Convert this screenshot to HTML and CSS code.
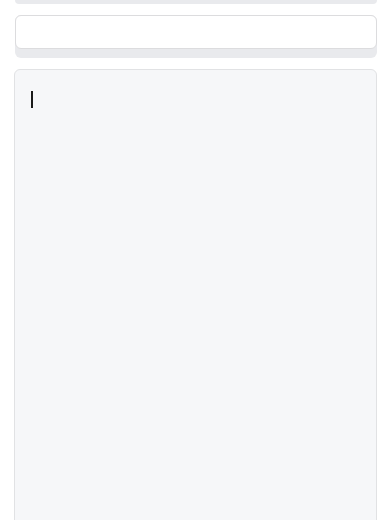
FILE: index.html
```html
<!DOCTYPE html>
<html>
<head>
<meta charset="utf-8">
<link rel="stylesheet" href="styles.css">
</head>
<body>
<div class="page">
  <div class="prev-strip"></div>
  <div class="field-wrap">
    <div class="field"></div>
  </div>
  <div class="editor">
    <span class="caret"></span>
  </div>
</div>
</body>
</html>
```
FILE: styles.css
```css
html, body {
  margin: 0;
  padding: 0;
  background: #ffffff;
  font-family: "Liberation Sans", Arial, sans-serif;
  overflow: hidden;
  height: 520px;
}
.page {
  display: flex;
  flex-direction: column;
  padding: 0 13px 0 14px;
}
.prev-strip {
  height: 4px;
  background: #e9eaed;
  border-radius: 0 0 6px 6px;
  margin: 0 0 11px 1px;
}
.field-wrap {
  background: #e9eaed;
  border-radius: 6px;
  padding-bottom: 9px;
  margin-left: 1px;
}
.field {
  height: 32px;
  background: #ffffff;
  border: 1px solid #dcdcde;
  border-radius: 6px;
}
.editor {
  margin-top: 11px;
  height: 460px;
  background: #f6f7f9;
  border: 1px solid #e1e2e4;
  border-radius: 6px;
  padding: 21px 16px;
  box-sizing: border-box;
}
.caret {
  display: block;
  width: 2px;
  height: 17px;
  background: #1a1a1a;
}
```
